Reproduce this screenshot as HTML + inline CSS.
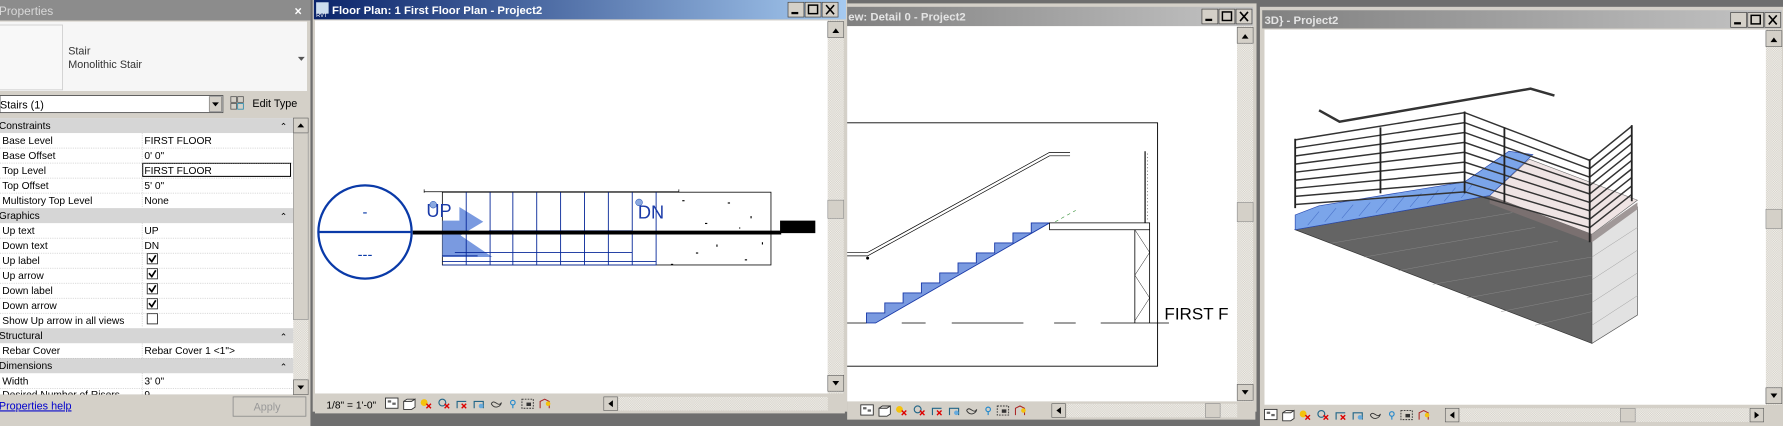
<!DOCTYPE html>
<html><head><meta charset="utf-8"><style>
html,body{margin:0;padding:0;width:1783px;height:426px;overflow:hidden;background:#6e6e6e}
svg{display:block}
text{font-family:"Liberation Sans",sans-serif}
</style></head><body>
<svg width="1783" height="426" viewBox="0 0 1568 374.6" preserveAspectRatio="none" xmlns="http://www.w3.org/2000/svg">
<defs>
<linearGradient id="act" x1="0" x2="1"><stop offset="0" stop-color="#0a246a"/><stop offset="1" stop-color="#a6caf0"/></linearGradient>
<linearGradient id="ina" x1="0" x2="1"><stop offset="0" stop-color="#808080"/><stop offset="1" stop-color="#c4c4c4"/></linearGradient>
<pattern id="chk" width="2" height="2" patternUnits="userSpaceOnUse"><rect width="2" height="2" fill="#f2f1ec"/><rect width="1" height="1" fill="#d4d0c8"/><rect x="1" y="1" width="1" height="1" fill="#d4d0c8"/></pattern>
<g id="btns"><rect x="0" y="0" width="14" height="13" fill="#d4d0c8" stroke="#404040" stroke-width="0.6"/><rect x="3" y="8.5" width="6" height="2" fill="#000"/><rect x="15" y="0" width="14" height="13" fill="#d4d0c8" stroke="#404040" stroke-width="0.6"/><rect x="18" y="2.5" width="8" height="7.5" fill="none" stroke="#000" stroke-width="1.3"/><rect x="30" y="0" width="14" height="13" fill="#d4d0c8" stroke="#404040" stroke-width="0.6"/><path d="M33.5 2.5l7 8M40.5 2.5l-7 8" stroke="#000" stroke-width="1.4"/></g>
<g id="icons">
<rect x="0" y="0" width="11" height="9" fill="#fff" stroke="#333" stroke-width="0.8"/><rect x="2" y="2" width="3" height="2" fill="#666"/><rect x="6" y="4" width="3" height="2" fill="#666"/>
<path d="M16 3h7l3-2v7l-3 2h-7z M16 3l3-2h7" fill="#fff" stroke="#333" stroke-width="0.8"/>
<circle cx="34" cy="4" r="3" fill="#f4c20d"/><path d="M36 5l4 4M40 5l-4 4" stroke="#d00" stroke-width="1.2"/>
<circle cx="50" cy="4" r="3" fill="none" stroke="#268" stroke-width="1"/><path d="M52 5l4 4M56 5l-4 4" stroke="#d00" stroke-width="1.2"/>
<path d="M63 9v-6h8" fill="none" stroke="#268" stroke-width="1"/><path d="M67 5l4 4M71 5l-4 4" stroke="#d00" stroke-width="1.2"/>
<path d="M78 9v-6h8v6" fill="none" stroke="#268" stroke-width="1"/><circle cx="84" cy="7" r="2" fill="#6ad"/>
<path d="M93 5c3-5 6 4 9-1c-1 4-6 6-9 1" fill="none" stroke="#333" stroke-width="0.8"/>
<circle cx="112" cy="4" r="2" fill="none" stroke="#28c" stroke-width="1"/><path d="M112 6v3" stroke="#28c"/>
<rect x="120" y="1" width="10" height="8" fill="none" stroke="#333" stroke-width="0.8" stroke-dasharray="1.5 1"/><rect x="124" y="4" width="4" height="3" fill="#333"/>
<path d="M136 9v-6l4-2 4 2v6" fill="none" stroke="#a22" stroke-width="0.9"/><circle cx="143" cy="5" r="2" fill="#f4c20d"/>
</g>
</defs>

<!-- ===== Properties panel ===== -->
<rect x="0" y="0" width="273" height="374.6" fill="#d4d0c8"/>
<rect x="0" y="0" width="273" height="18" fill="#8c8c8c"/>
<text x="-1" y="13" font-size="10.5" fill="#d8d8d8">Properties</text>
<text x="259" y="13.5" font-size="11" fill="#fff" font-weight="bold">×</text>
<rect x="0" y="19" width="270" height="61" fill="#f6f6f6"/>
<rect x="-1" y="22" width="56" height="57" fill="#f8f8f8" stroke="#d0d0d0" stroke-width="0.8"/>
<text x="60" y="48" font-size="9.5" fill="#333">Stair</text>
<text x="60" y="60" font-size="9.5" fill="#333">Monolithic Stair</text>
<path d="M262 50h6l-3 3.5z" fill="#555"/>
<rect x="0" y="84" width="196" height="15" fill="#fff" stroke="#555" stroke-width="0.8"/>
<text x="0" y="95.5" font-size="9.5" fill="#000">Stairs (1)</text>
<rect x="184" y="85" width="11" height="13" fill="#d4d0c8" stroke="#666" stroke-width="0.5"/>
<path d="M186.5 90h6l-3 3.5z" fill="#000"/>
<rect x="203" y="85" width="5" height="5" fill="none" stroke="#555" stroke-width="0.7"/><rect x="209" y="85" width="5" height="5" fill="none" stroke="#555" stroke-width="0.7"/><rect x="203" y="91" width="5" height="5" fill="none" stroke="#555" stroke-width="0.7"/><rect x="209" y="91" width="5" height="5" fill="none" stroke="#28a" stroke-width="0.7"/>
<text x="222" y="94" font-size="9.5" fill="#000">Edit Type</text>

<!-- grid -->
<rect x="0" y="103.8" width="258" height="243" fill="#fff"/>
<g font-size="9" fill="#000">
<rect x="0" y="103.8" width="258" height="13.2" fill="#d6d6d6"/><text x="-1" y="113.5">Constraints</text><text x="246" y="114" font-size="8">⌃</text>
<text x="2" y="126.5">Base Level</text><text x="127" y="126.5">FIRST FLOOR</text>
<text x="2" y="139.7">Base Offset</text><text x="127" y="139.7">0'  0"</text>
<rect x="125.5" y="143.6" width="130" height="11.5" fill="none" stroke="#000" stroke-width="0.9"/>
<text x="2" y="152.9">Top Level</text><text x="127" y="152.9">FIRST FLOOR</text>
<text x="2" y="166.1">Top Offset</text><text x="127" y="166.1">5'  0"</text>
<text x="2" y="179.3">Multistory Top Level</text><text x="127" y="179.3">None</text>
<rect x="0" y="183" width="258" height="13.2" fill="#d6d6d6"/><text x="-1" y="192.5">Graphics</text><text x="246" y="193" font-size="8">⌃</text>
<text x="2" y="205.7">Up text</text><text x="127" y="205.7">UP</text>
<text x="2" y="218.9">Down text</text><text x="127" y="218.9">DN</text>
<text x="2" y="232.1">Up label</text>
<text x="2" y="245.3">Up arrow</text>
<text x="2" y="258.5">Down label</text>
<text x="2" y="271.7">Down arrow</text>
<text x="2" y="284.9">Show Up arrow in all views</text>
<rect x="0" y="288.6" width="258" height="13.2" fill="#d6d6d6"/><text x="-1" y="298.3">Structural</text><text x="246" y="298.8" font-size="8">⌃</text>
<text x="2" y="311.5">Rebar Cover</text><text x="127" y="311.5">Rebar Cover 1 &lt;1"&gt;</text>
<rect x="0" y="315" width="258" height="13.2" fill="#d6d6d6"/><text x="-1" y="324.7">Dimensions</text><text x="246" y="325.2" font-size="8">⌃</text>
<text x="2" y="337.9">Width</text><text x="127" y="337.9">3'  0"</text>
<text x="2" y="350">Desired Number of Risers</text><text x="127" y="350">9</text>
</g>
<g fill="#fff" stroke="#333" stroke-width="0.8">
<rect x="129.5" y="223" width="9" height="9"/><rect x="129.5" y="236.2" width="9" height="9"/><rect x="129.5" y="249.4" width="9" height="9"/><rect x="129.5" y="262.6" width="9" height="9"/><rect x="129.5" y="275.8" width="9" height="9"/>
</g>
<g fill="none" stroke="#000" stroke-width="1.5"><path d="M131 227l2.5 3 3.5-5.5"/><path d="M131 240.2l2.5 3 3.5-5.5"/><path d="M131 253.4l2.5 3 3.5-5.5"/><path d="M131 266.6l2.5 3 3.5-5.5"/></g>
<g stroke="#aaa" stroke-width="0.4" stroke-dasharray="1 1">
<path d="M0 130.2H258M0 143.4H258M0 156.6H258M0 169.8H258M0 209.4H258M0 222.6H258M0 235.8H258M0 249H258M0 262.2H258M0 275.4H258M0 315H258M0 341.4H258M125 117V183M125 196V288M125 302V315M125 328V347"/></g>
<rect x="0" y="347" width="258" height="27" fill="#d4d0c8"/>
<rect x="258" y="103.8" width="13" height="243" fill="url(#chk)"/>
<rect x="258" y="103.8" width="13" height="13" fill="#d4d0c8" stroke="#555" stroke-width="0.5"/><path d="M261.5 112h6l-3-3.5z" fill="#000"/>
<rect x="258" y="117" width="13" height="164" fill="#d4d0c8" stroke="#888" stroke-width="0.5"/>
<rect x="258" y="334" width="13" height="13" fill="#d4d0c8" stroke="#555" stroke-width="0.5"/><path d="M261.5 339h6l-3 3.5z" fill="#000"/>
<text x="-1" y="360" font-size="9.5" fill="#00c" text-decoration="underline">Properties help</text>
<rect x="205" y="349" width="64" height="17" fill="#d4d0c8" stroke="#888" stroke-width="0.7"/>
<text x="223" y="361" font-size="9.5" fill="#999">Apply</text>

<!-- ===== Floor plan window ===== -->
<rect x="275" y="0" width="470" height="362" fill="#d4d0c8"/>
<rect x="276" y="0" width="468" height="17" fill="url(#act)"/>
<rect x="278" y="2" width="11" height="10" fill="#cde" /><text x="278" y="15" font-size="5" fill="#fff">RVT</text>
<text x="292" y="12.5" font-size="10" font-weight="bold" fill="#fff">Floor Plan: 1 First Floor Plan - Project2</text>
<use href="#btns" x="693" y="2"/>
<rect x="277" y="18" width="451" height="328" fill="#fff"/>
<rect x="728" y="18" width="14" height="328" fill="url(#chk)"/>
<rect x="728" y="19" width="14" height="14" fill="#d4d0c8" stroke="#555" stroke-width="0.5"/><path d="M732 29h6l-3-4z" fill="#000"/>
<rect x="728" y="176" width="14" height="16" fill="#d4d0c8" stroke="#888" stroke-width="0.5"/>
<rect x="728" y="330" width="14" height="14" fill="#d4d0c8" stroke="#555" stroke-width="0.5"/><path d="M732 335h6l-3 4z" fill="#000"/>
<rect x="277" y="346.5" width="466" height="17" fill="#d4d0c8"/>
<text x="287" y="359" font-size="9" fill="#000">1/8" = 1'-0"</text>
<use href="#icons" x="339" y="350"/>
<rect x="531" y="349" width="12" height="12" fill="#d4d0c8" stroke="#555" stroke-width="0.5"/><path d="M539 352v6l-4-3z" fill="#000"/>
<rect x="544" y="349" width="184" height="12" fill="url(#chk)"/>
<!-- plan drawing -->
<circle cx="321" cy="204" r="41" fill="none" stroke="#0a3aa8" stroke-width="2"/>
<path d="M280 204H362" stroke="#0a3aa8" stroke-width="2"/>
<text x="321" y="191" font-size="13" fill="#0a3aa8" text-anchor="middle">-</text>
<text x="321" y="228" font-size="13" fill="#0a3aa8" text-anchor="middle">---</text>
<path d="M373 168.6H597" stroke="#000" stroke-width="0.6"/><path d="M373 166.5v3M597 166.5v3" stroke="#000" stroke-width="0.6"/>
<rect x="389" y="169" width="289" height="64" fill="#fff" stroke="#000" stroke-width="0.7"/>
<path d="M389 194h15v-12l21 13-20 12 28 19h-44z" fill="#7a9ae0"/>
<g stroke="#0a2a9a" stroke-width="0.8"><path d="M410 169V233M431 169V233M451 169V233M472 169V233M493 169V233M514 169V233M535 169V233M556 169V233M577 169V233M389 233H577M389 230H577M389 225H420M400 222H556M430 203H556"/></g>
<g fill="#000"><rect x="600" y="176" width="2" height="1"/><rect x="640" y="178" width="2" height="1"/><rect x="660" y="190" width="1" height="2"/><rect x="612" y="222" width="2" height="1"/><rect x="630" y="215" width="1" height="2"/><rect x="655" y="228" width="2" height="1"/><rect x="670" y="213" width="1" height="2"/><rect x="590" y="232" width="2" height="1"/><rect x="620" y="196" width="2" height="1"/><rect x="650" y="200" width="1" height="1"/></g>
<path d="M363 204.5H687" stroke="#000" stroke-width="3.5"/>
<rect x="686" y="194" width="31" height="11" fill="#000"/>
<circle cx="381" cy="180" r="3" fill="#8aa8e0" stroke="#0a3aa8" stroke-width="0.4"/>
<circle cx="562" cy="178" r="3" fill="#8aa8e0" stroke="#0a3aa8" stroke-width="0.4"/>
<text x="375" y="191" font-size="16" fill="#1a3aa8">UP</text>
<text x="561" y="192" font-size="16" fill="#1a3aa8">DN</text>

<!-- ===== Detail window ===== -->
<rect x="745" y="3" width="360" height="359" fill="#d4d0c8"/>
<rect x="745" y="6" width="357" height="17" fill="url(#ina)"/>
<text x="746" y="18" font-size="10" font-weight="bold" fill="#e4e4e4">ew: Detail 0 - Project2</text>
<use href="#btns" x="1057" y="8"/>
<rect x="745" y="23" width="343" height="330" fill="#fff"/>
<rect x="1088" y="23" width="14" height="330" fill="url(#chk)"/>
<rect x="1088" y="24" width="14" height="14" fill="#d4d0c8" stroke="#555" stroke-width="0.5"/><path d="M1092 34h6l-3-4z" fill="#000"/>
<rect x="1088" y="178" width="14" height="17" fill="#d4d0c8" stroke="#888" stroke-width="0.5"/>
<rect x="1088" y="338" width="14" height="14" fill="#d4d0c8" stroke="#555" stroke-width="0.5"/><path d="M1092 343h6l-3 4z" fill="#000"/>
<rect x="745" y="353" width="359" height="16" fill="#d4d0c8"/>
<use href="#icons" x="757" y="356"/>
<rect x="925" y="355" width="12" height="12" fill="#d4d0c8" stroke="#555" stroke-width="0.5"/><path d="M933 358v6l-4-3z" fill="#000"/>
<rect x="938" y="355" width="150" height="12" fill="url(#chk)"/>
<rect x="1060" y="355" width="13" height="12" fill="#d4d0c8" stroke="#888" stroke-width="0.5"/>
<!-- section -->
<path d="M745 108H1018V322H745" fill="none" stroke="#000" stroke-width="0.8"/>
<path d="M762 284V275.2H778.1V266.4H794.2V257.6H810.3V248.8H826.4V240H842.5V231.2H858.6V222.4H874.7V213.6H890.8V204.8H906.9V196H923L770 284Z" fill="#7a9ae0" stroke="#1a3aa8" stroke-width="0.8"/>
<path d="M923 196H1011V202H923z" fill="#fff" stroke="#000" stroke-width="0.7"/>
<path d="M998 202V284M1011 202V284" stroke="#000" stroke-width="0.7"/>
<path d="M998 202l13 20-13 20 13 20-13 20" fill="none" stroke="#000" stroke-width="0.4"/>
<path d="M1007 133V196" stroke="#000" stroke-width="1"/><path d="M1009 135V195" stroke="#000" stroke-width="0.4" stroke-dasharray="1 2"/>
<path d="M745 222H763L923 134H941M745 225H763L923 137H941" fill="none" stroke="#000" stroke-width="0.6"/>
<circle cx="763" cy="227" r="1.3" fill="#000"/>
<path d="M928 195l18-10" stroke="#2a8a2a" stroke-width="0.5" stroke-dasharray="3 3"/>
<path d="M745 284H762M793 284H814M837 284H900M927 284H946M968 284H1028" stroke="#000" stroke-width="0.7"/>
<text x="1024" y="281" font-size="15" fill="#000">FIRST F</text>

<!-- ===== 3D window ===== -->
<rect x="1108" y="6" width="460" height="369" fill="#d4d0c8"/>
<rect x="1110" y="9" width="457" height="16" fill="url(#ina)"/>
<text x="1112" y="21" font-size="10" font-weight="bold" fill="#e4e4e4">3D} - Project2</text>
<use href="#btns" x="1522" y="11"/>
<rect x="1112" y="26" width="441" height="330" fill="#fff"/>
<rect x="1553" y="26" width="14" height="330" fill="url(#chk)"/>
<rect x="1553" y="27" width="14" height="14" fill="#d4d0c8" stroke="#555" stroke-width="0.5"/><path d="M1557 37h6l-3-4z" fill="#000"/>
<rect x="1553" y="184" width="14" height="17" fill="#d4d0c8" stroke="#888" stroke-width="0.5"/>
<rect x="1553" y="341" width="14" height="14" fill="#d4d0c8" stroke="#555" stroke-width="0.5"/><path d="M1557 346h6l-3 4z" fill="#000"/>
<rect x="1112" y="356" width="455" height="18" fill="#d4d0c8"/>
<use href="#icons" x="1112" y="360"/>
<rect x="1271" y="359" width="12" height="12" fill="#d4d0c8" stroke="#555" stroke-width="0.5"/><path d="M1279 362v6l-4-3z" fill="#000"/>
<rect x="1284" y="359" width="255" height="12" fill="url(#chk)"/>
<rect x="1425" y="359" width="13" height="12" fill="#d4d0c8" stroke="#888" stroke-width="0.5"/>
<rect x="1539" y="359" width="12" height="12" fill="#d4d0c8" stroke="#555" stroke-width="0.5"/><path d="M1543 362v6l4-3z" fill="#000"/>
<!-- 3D model -->
<path d="M1139 202L1310 172L1400 208V302Z" fill="#646464" stroke="#333" stroke-width="0.6"/>
<g stroke="#8a8a8a" stroke-width="0.4"><path d="M1170 214L1330 187M1200 226L1350 200M1230 238L1370 212M1260 250L1400 226M1290 262L1400 242M1320 274L1400 258M1350 286L1400 274"/></g>
<path d="M1400 208L1440 182V277L1400 302Z" fill="#e2e2e2" stroke="#555" stroke-width="0.6"/>
<g stroke="#999" stroke-width="0.4"><path d="M1400 226L1440 200M1400 246L1440 220M1400 266L1440 240M1400 286L1440 260"/></g>
<path d="M1310 172L1345 140L1440 176L1400 206Z" fill="#efe4e4" stroke="#666" stroke-width="0.5"/>
<path d="M1310 172L1400 206V213L1310 179Z" fill="#7a7070"/>
<path d="M1400 206L1440 178V184L1400 213Z" fill="#a09898"/>
<path d="M1139 202V189L1160 181L1288 160L1327 133L1348 136L1310 172Z" fill="#6d9be8" fill-opacity="0.9" stroke="#2a4ab0" stroke-width="0.6"/>
<g stroke="#4a72c8" stroke-width="0.5"><path d="M1150 198l10-12M1165 195l10-12M1180 192l10-12M1195 190l10-12M1210 187l10-12M1225 185l10-12M1240 182l10-12M1255 179l10-12M1270 177l10-12M1285 174l10-12"/></g>
<g stroke="#333" stroke-width="1.3" fill="none">
<path d="M1139 123L1288 99L1398 141L1435 111"/>
<path d="M1139 130.1L1288 107.8L1398 148.4L1435 118.5"/>
<path d="M1139 137.2L1288 116.5L1398 155.8L1435 126"/>
<path d="M1139 144.3L1288 125.2L1398 163.2L1435 133.5"/>
<path d="M1139 151.4L1288 133.9L1398 170.6L1435 141"/>
<path d="M1139 158.5L1288 142.6L1398 178L1435 148.5"/>
<path d="M1139 165.6L1288 151.3L1398 185.4L1435 156"/>
<path d="M1139 172.7L1288 160L1398 192.8L1435 163.5"/>
<path d="M1139 179.8L1288 168.7L1398 200.2L1435 171"/>
</g>
<g stroke="#222" stroke-width="1.6"><path d="M1139 122V183M1214 112V170M1288 98V170M1323 112V178M1398 140V213M1435 110V177"/></g>
<path d="M1160 97L1178 107L1346 78L1367 84" fill="none" stroke="#333" stroke-width="2.2"/>
</svg>
</body></html>
